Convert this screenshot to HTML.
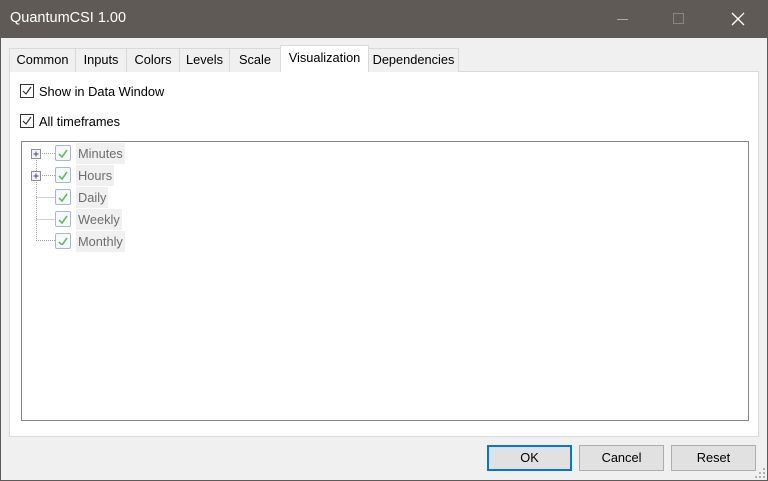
<!DOCTYPE html>
<html><head><style>
*{margin:0;padding:0;box-sizing:border-box}
body{width:768px;height:481px;background:#f0f0f0;font-family:"Liberation Sans",sans-serif;font-size:12.8px;color:#000;position:relative;overflow:hidden}
.abs{position:absolute}
.title{left:0;top:0;width:768px;height:38px;background:#5f5a55;color:#fff;font-size:14.5px}
.tab{top:48px;height:24px;border:1px solid #d9d9d9;border-bottom:none;background:#f0f0f0;text-align:center;line-height:22px}
.sel{top:45px;height:27px;background:#fff;border-color:#d9d9d9;z-index:2;line-height:24px}
.panel{left:9px;top:71px;width:750px;height:366px;background:#fff;border:1px solid #d9d9d9}
.cb{width:14px;height:14px;border:1px solid #333;background:#fff}
.tree{left:21px;top:141px;width:728px;height:280px;border:1px solid #828790;background:#fff}
.item{left:55px;height:18px}
.gcb{position:absolute;left:0;top:2px;width:16px;height:16px;border:1px solid #a6b8cf;border-radius:2px;background:#f6f8fb}
.lbl{position:absolute;left:21px;top:0;height:21px;background:#f0f0f0;color:#6d6d6d;line-height:21px;padding:0 2px 0 2px}
.btn{top:445px;width:85px;height:26px;border:1px solid #adadad;background:#e1e1e1;text-align:center;line-height:24px}
</style></head><body>
<div class="abs" style="left:0;top:0;width:768px;height:481px;border:1px solid #5f5a55;z-index:5"></div>
<div class="abs title"><span class="abs" style="left:10px;top:10px">QuantumCSI 1.00</span>
<div class="abs" style="left:617px;top:19px;width:11px;height:1px;background:#aaa"></div>
<div class="abs" style="left:673px;top:13px;width:11px;height:11px;border:1px solid #8a8580"></div>
<svg class="abs" style="left:731px;top:12px" width="14" height="14"><path d="M1 1L13 13M13 1L1 13" stroke="#fff" stroke-width="1.3"/></svg>
</div>
<div class="panel abs"></div>
<div class="abs tab" style="left:9px;width:67px">Common</div>
<div class="abs tab" style="left:75px;width:52px">Inputs</div>
<div class="abs tab" style="left:126px;width:54px">Colors</div>
<div class="abs tab" style="left:179px;width:51px">Levels</div>
<div class="abs tab" style="left:229px;width:52px">Scale</div>
<div class="abs tab sel" style="left:280px;width:89px">Visualization</div>
<div class="abs tab" style="left:368px;width:91px">Dependencies</div>

<div class="abs cb" style="left:20px;top:84px"></div>
<svg class="abs" style="left:20px;top:84px" width="14" height="14"><path d="M3 7L6 10L11 3" stroke="#333" fill="none" stroke-width="1.2"/></svg>
<span class="abs" style="left:39px;top:84px">Show in Data Window</span>
<div class="abs cb" style="left:20px;top:114px"></div>
<svg class="abs" style="left:20px;top:114px" width="14" height="14"><path d="M3 7L6 10L11 3" stroke="#333" fill="none" stroke-width="1.2"/></svg>
<span class="abs" style="left:39px;top:114px">All timeframes</span>

<div class="abs tree"></div>
<svg class="abs" style="left:27px;top:145px" width="30" height="100">
<g stroke="#a0a0a0" stroke-dasharray="1,1" fill="none">
<path d="M9.5 13V95.5H28M13 8.5H28M13 30.5H28M9.5 52.5H28M9.5 74.5H28"/>
</g>
<rect x="4.5" y="4.5" width="9" height="9" fill="#f4f4f4" stroke="#8f8f8f"/>
<path d="M6.5 9H11.5M9 6.5V11.5" stroke="#3a4a80"/>
<rect x="4.5" y="26.5" width="9" height="9" fill="#f4f4f4" stroke="#8f8f8f"/>
<path d="M6.5 31H11.5M9 28.5V33.5" stroke="#3a4a80"/>
</svg>
<div class="abs item" style="top:143px"><div class="gcb"></div><div class="lbl">Minutes</div></div>
<div class="abs item" style="top:165px"><div class="gcb"></div><div class="lbl">Hours</div></div>
<div class="abs item" style="top:187px"><div class="gcb"></div><div class="lbl">Daily</div></div>
<div class="abs item" style="top:209px"><div class="gcb"></div><div class="lbl">Weekly</div></div>
<div class="abs item" style="top:231px"><div class="gcb"></div><div class="lbl">Monthly</div></div>
<svg class="abs" style="left:55px;top:145px" width="16" height="100">
<g stroke="#5cc25c" stroke-width="1.6" fill="none">
<path d="M4 9L7 12L12 5"/><path transform="translate(0,22)" d="M4 9L7 12L12 5"/><path transform="translate(0,44)" d="M4 9L7 12L12 5"/><path transform="translate(0,66)" d="M4 9L7 12L12 5"/><path transform="translate(0,88)" d="M4 9L7 12L12 5"/>
</g></svg>

<div class="abs btn" style="left:487px;border:2px solid #0078d7;line-height:22px">OK</div>
<div class="abs btn" style="left:579px">Cancel</div>
<div class="abs btn" style="left:671px">Reset</div>
<svg class="abs" style="left:755px;top:468px" width="12" height="12"><g fill="#b0b0b0"><rect x="8" y="0" width="2" height="2"/><rect x="4" y="4" width="2" height="2"/><rect x="8" y="4" width="2" height="2"/><rect x="0" y="8" width="2" height="2"/><rect x="4" y="8" width="2" height="2"/><rect x="8" y="8" width="2" height="2"/></g></svg>
</body></html>
